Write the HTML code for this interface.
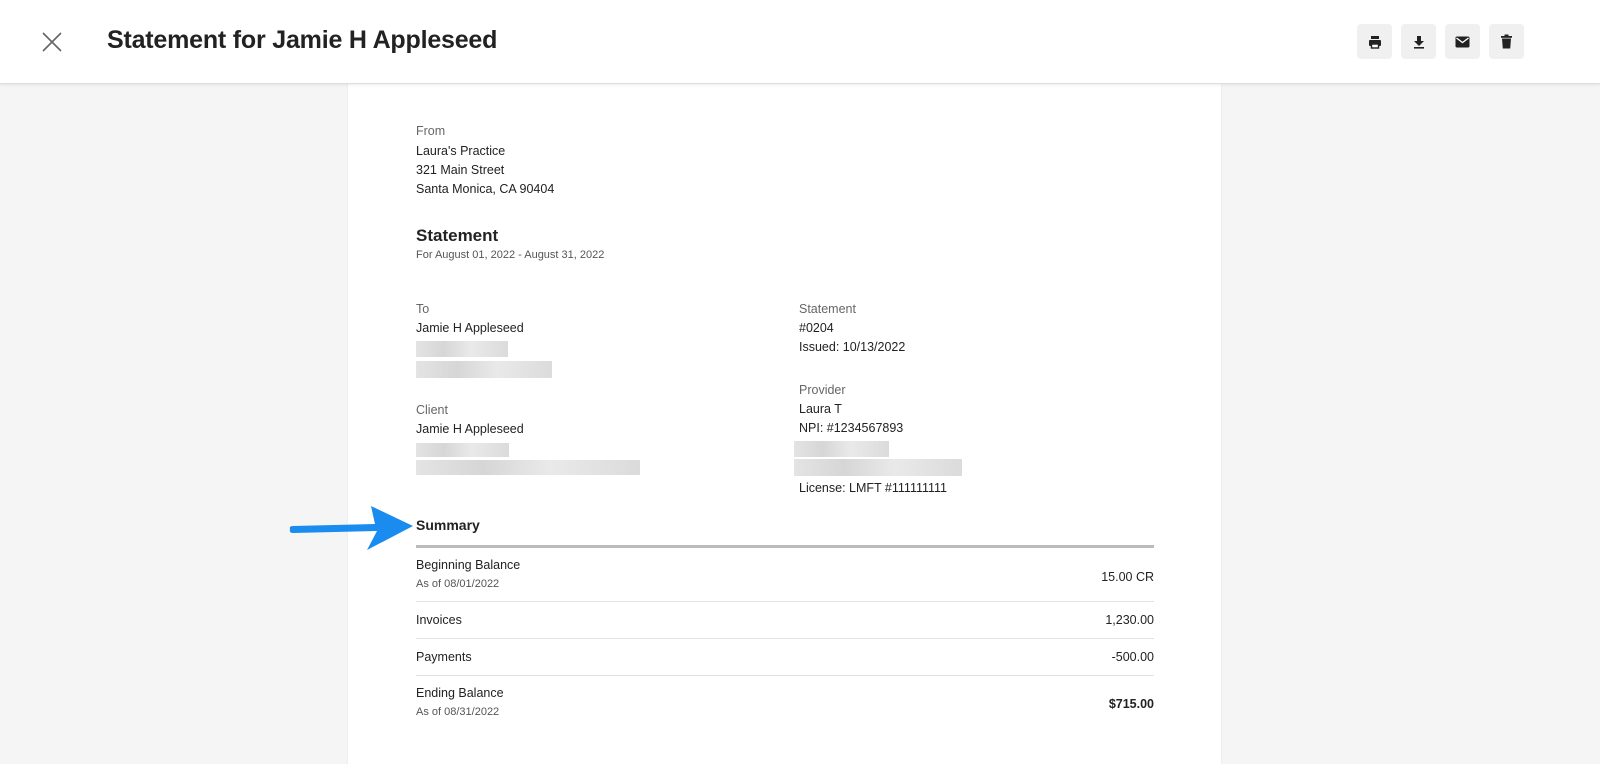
<!DOCTYPE html>
<html><head><meta charset="utf-8"><style>
*{margin:0;padding:0;box-sizing:border-box}
body{width:1600px;height:764px;overflow:hidden;background:#f5f5f5;font-family:"Liberation Sans",sans-serif;color:#222;position:relative}
.hdr{position:absolute;left:0;top:0;width:1600px;height:84px;background:#fff;border-bottom:1px solid #ddd;box-shadow:0 1px 3px rgba(0,0,0,.08);z-index:2}
.hdr h1{position:absolute;left:107px;top:26px;font-size:25px;font-weight:bold;color:#222;letter-spacing:-0.2px}
.btn{position:absolute;top:24px;width:35px;height:35px;background:#f0f0f0;border-radius:4px;display:flex;align-items:center;justify-content:center}
.paper{position:absolute;left:347px;top:84px;width:875px;height:680px;background:#fff;border-left:1px solid #eee;border-right:1px solid #eee}
.t{position:absolute;font-size:12.5px;color:#222;line-height:19px;white-space:nowrap}
.l{color:#666}
.s{font-size:11px;color:#555}
.blur{position:absolute;background:linear-gradient(90deg,#ddd,#ccc 30%,#e4e4e4 60%,#d2d2d2);opacity:.8}
.hr{position:absolute;left:416px;width:738px;height:1px;background:#e2e2e2}
.r{text-align:right;right:446px}
</style></head><body>
<div class="hdr">
<svg style="position:absolute;left:42px;top:32px" width="20" height="20" viewBox="0 0 20 20"><path d="M1 1L19 19M19 1L1 19" stroke="#666" stroke-width="1.6"/></svg>
<h1>Statement for Jamie H Appleseed</h1>
<div class="btn" style="left:1357px"><svg width="14" height="14" viewBox="0 0 14 14"><rect x="3" y="1" width="8" height="3" fill="#222"/><rect x="1" y="5" width="12" height="6" rx="1" fill="#222"/><rect x="3.5" y="9" width="7" height="4" fill="#fff" stroke="#222" stroke-width="1.4"/></svg></div>
<div class="btn" style="left:1401px"><svg width="14" height="14" viewBox="0 0 14 14"><path d="M5 1h4v5h3l-5 5-5-5h3z" fill="#222"/><rect x="2" y="12" width="10" height="1.6" fill="#222"/></svg></div>
<div class="btn" style="left:1445px"><svg width="15" height="12" viewBox="0 0 15 12"><rect x="0.5" y="0.5" width="14" height="11" rx="1.5" fill="#222"/><path d="M1.5 2l6 4.5 6-4.5" stroke="#fff" stroke-width="1.3" fill="none"/></svg></div>
<div class="btn" style="left:1489px"><svg width="13" height="15" viewBox="0 0 13 15"><rect x="1" y="2" width="11" height="1.8" fill="#222"/><rect x="4.5" y="0.5" width="4" height="2" fill="#222"/><path d="M2 4.5h9l-.8 10H2.8z" fill="#222"/></svg></div>
</div>
<div class="paper"></div>
<div class="t l" style="left:416px;top:122px">From</div>
<div class="t" style="left:416px;top:142px">Laura's Practice<br>321 Main Street<br>Santa Monica, CA 90404</div>
<div class="t" style="left:416px;top:225px;font-size:17px;font-weight:bold;line-height:22px">Statement</div>
<div class="t s" style="left:416px;top:246px">For August 01, 2022 - August 31, 2022</div>
<div class="t l" style="left:416px;top:300px">To</div>
<div class="t" style="left:416px;top:319px">Jamie H Appleseed</div>
<div class="blur" style="left:416px;top:341px;width:92px;height:16px"></div>
<div class="blur" style="left:416px;top:361px;width:136px;height:17px"></div>
<div class="t l" style="left:416px;top:401px">Client</div>
<div class="t" style="left:416px;top:420px">Jamie H Appleseed</div>
<div class="blur" style="left:416px;top:443px;width:93px;height:14px"></div>
<div class="blur" style="left:416px;top:460px;width:224px;height:15px"></div>
<div class="t l" style="left:799px;top:300px">Statement</div>
<div class="t" style="left:799px;top:319px">#0204<br>Issued: 10/13/2022</div>
<div class="t l" style="left:799px;top:381px">Provider</div>
<div class="t" style="left:799px;top:400px">Laura T<br>NPI: #1234567893</div>
<div class="blur" style="left:794px;top:441px;width:95px;height:16px"></div>
<div class="blur" style="left:794px;top:459px;width:168px;height:17px"></div>
<div class="t" style="left:799px;top:479px">License: LMFT #111111111</div>
<div class="t" style="left:416px;top:516px;font-size:14px;font-weight:bold">Summary</div>
<div style="position:absolute;left:416px;top:545px;width:738px;height:3px;background:#bbb"></div>
<div class="t" style="left:416px;top:556px">Beginning Balance</div>
<div class="t s" style="left:416px;top:575px">As of 08/01/2022</div>
<div class="t r" style="top:568px">15.00 CR</div>
<div class="hr" style="top:601px"></div>
<div class="t" style="left:416px;top:611px">Invoices</div>
<div class="t r" style="top:611px">1,230.00</div>
<div class="hr" style="top:638px"></div>
<div class="t" style="left:416px;top:648px">Payments</div>
<div class="t r" style="top:648px">-500.00</div>
<div class="hr" style="top:675px"></div>
<div class="t" style="left:416px;top:684px">Ending Balance</div>
<div class="t s" style="left:416px;top:703px">As of 08/31/2022</div>
<div class="t r" style="top:695px;font-weight:bold">$715.00</div>
<svg style="position:absolute;left:285px;top:503px" width="135" height="50" viewBox="0 0 135 50"><path d="M5 26 Q4 30 8 30 L92 28 L82 47 L128 23 L86 3 L90 21 L8 23 Q4 23 5 26Z" fill="#1a8cf0"/></svg>
</body></html>
